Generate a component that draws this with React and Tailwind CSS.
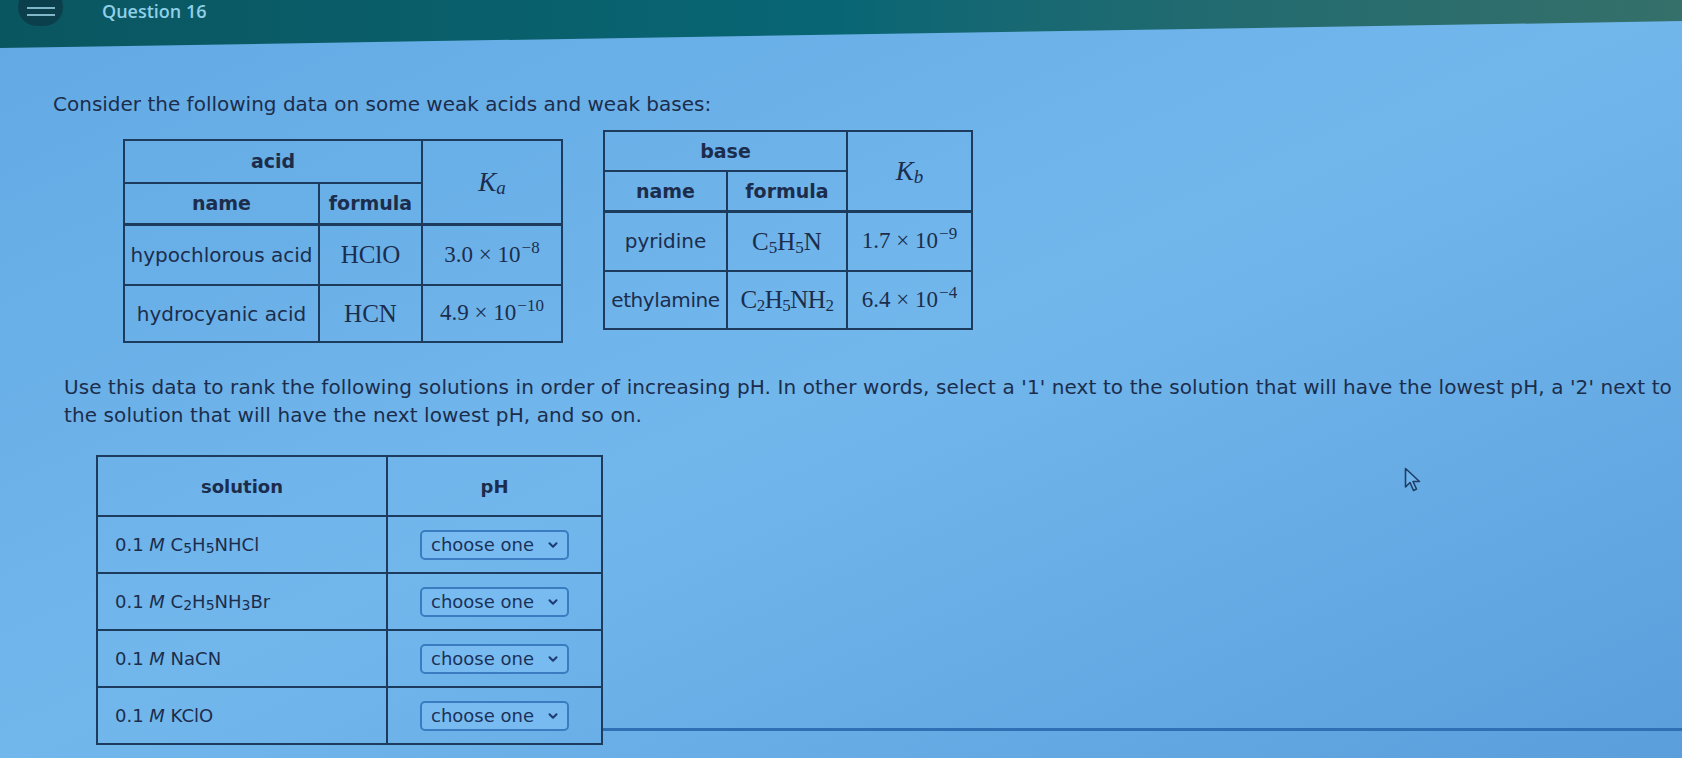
import React from "react";
import { ChevronDown } from "lucide-react";

// Serif scientific notation: 3.0 × 10^-8
const Sci = ({ m, e }) => (
  <span className="font-['Liberation_Serif','DejaVu_Serif',serif] text-[23px] whitespace-nowrap">
    {m} × 10
    <sup className="text-[17px] relative -top-[9px] ml-[1px]">−{e}</sup>
  </span>
);

const Sub = ({ children }) => <sub className="text-[14px] relative top-[2px]">{children}</sub>;

// serif formula subscript (bigger, lower)
const FSub = ({ children }) => <sub className="text-[17px] relative top-[3px]">{children}</sub>;

// pH dropdown
const Choose = () => (
  <div className="flex justify-center">
    <div className="flex items-center justify-between whitespace-nowrap h-[30px] w-[149px] pl-[9px] pr-[7px] rounded-[5px] border-2 border-[#3b7cc0] bg-[#78bbf0] text-[#1b3158] text-[18px]">
      <span>choose one</span>
      <ChevronDown size={14} strokeWidth={3.5} className="text-[#1e3b74]" />
    </div>
  </div>
);

const acids = [
  { name: "hypochlorous acid", formula: "HClO", m: "3.0", e: "8", h: "h-[61px]" },
  { name: "hydrocyanic acid", formula: "HCN", m: "4.9", e: "10", h: "h-[57px]" },
];

const solutions = [
  <>0.1 <i>M</i> C<Sub>5</Sub>H<Sub>5</Sub>NHCl</>,
  <>0.1 <i>M</i> C<Sub>2</Sub>H<Sub>5</Sub>NH<Sub>3</Sub>Br</>,
  <>0.1 <i>M</i> NaCN</>,
  <>0.1 <i>M</i> KClO</>,
];

const cell = "border-2 border-[#1d3b5c]";

export default function App() {
  return (
    <div className="relative w-[1682px] h-[758px] overflow-hidden flex flex-col bg-linear-to-br from-[#62a9e4] via-[#72b7ec] to-[#5a9fdc] text-[#1c2d4c] font-['DejaVu_Sans',sans-serif]">
      {/* Top bar */}
      <div className="h-[48px] shrink-0 flex items-start bg-linear-to-r from-[#0a5660] via-[#086674] to-[#35706a] [clip-path:polygon(0_0,100%_0,100%_44%,0_100%)]">
        <div className="ml-[18px] -mt-[12px] w-[45px] h-[38px] rounded-full bg-[#0c3f4c] flex flex-col items-center justify-end pb-[10px] gap-[5px]">
          <div className="w-[28px] h-[2px] bg-[#7fb6c8]" />
          <div className="w-[28px] h-[2px] bg-[#7fb6c8]" />
        </div>
        <div className="ml-[39px] mt-[1px] leading-[20px] text-[18px] font-semibold text-[#8fd0e8] font-['Open_Sans',sans-serif]">
          Question 16
        </div>
      </div>

      {/* Intro */}
      <p className="ml-[53px] mt-[44px] text-[20px] leading-[24px]">
        Consider the following data on some weak acids and weak bases:
      </p>

      {/* Acid and base tables */}
      <div className="flex items-start mt-[23px] ml-[123px] gap-[40px]">
        <table className="table-fixed border-collapse border-2 border-[#1d3b5c] text-[20px] text-center">
          <colgroup>
            <col className="w-[195px]" />
            <col className="w-[103px]" />
            <col className="w-[140px]" />
          </colgroup>
          <tbody>
            <tr className="h-[43px]">
              <th colSpan={2} className={`${cell} font-bold text-[19px]`}>acid</th>
              <th rowSpan={2} className={`${cell} font-normal`}>
                <span className="font-['Liberation_Serif',serif] italic text-[27px]">
                  K<sub className="text-[19px] relative top-[3px]">a</sub>
                </span>
              </th>
            </tr>
            <tr className="h-[41px] border-b-[3px] border-[#1d3b5c]">
              <th className={`${cell} font-bold text-[19px]`}>name</th>
              <th className={`${cell} font-bold text-[19px]`}>formula</th>
            </tr>
            {acids.map((a) => (
              <tr key={a.name} className={a.h}>
                <td className={`${cell} whitespace-nowrap`}>{a.name}</td>
                <td className={`${cell} font-['Liberation_Serif',serif] text-[25px]`}>{a.formula}</td>
                <td className={cell}>
                  <Sci m={a.m} e={a.e} />
                </td>
              </tr>
            ))}
          </tbody>
        </table>

        <table className="-mt-[9px] table-fixed border-collapse border-2 border-[#1d3b5c] text-[20px] text-center">
          <colgroup>
            <col className="w-[123px]" />
            <col className="w-[120px]" />
            <col className="w-[125px]" />
          </colgroup>
          <tbody>
            <tr className="h-[40px]">
              <th colSpan={2} className={`${cell} font-bold text-[19px]`}>base</th>
              <th rowSpan={2} className={`${cell} font-normal`}>
                <span className="font-['Liberation_Serif',serif] italic text-[27px]">
                  K<sub className="text-[19px] relative top-[3px]">b</sub>
                </span>
              </th>
            </tr>
            <tr className="h-[40px] border-b-[3px] border-[#1d3b5c]">
              <th className={`${cell} font-bold text-[19px]`}>name</th>
              <th className={`${cell} font-bold text-[19px]`}>formula</th>
            </tr>
            <tr className="h-[60px]">
              <td className={cell}>pyridine</td>
              <td className={`${cell} font-['Liberation_Serif',serif] text-[25px] whitespace-nowrap`}>
                C<FSub>5</FSub>H<FSub>5</FSub>N
              </td>
              <td className={cell}>
                <Sci m="1.7" e="9" />
              </td>
            </tr>
            <tr className="h-[58px]">
              <td className={`${cell} tracking-[-0.4px] whitespace-nowrap`}>ethylamine</td>
              <td className={`${cell} font-['Liberation_Serif',serif] text-[25px] whitespace-nowrap tracking-[-0.5px]`}>
                C<FSub>2</FSub>H<FSub>5</FSub>NH<FSub>2</FSub>
              </td>
              <td className={cell}>
                <Sci m="6.4" e="4" />
              </td>
            </tr>
          </tbody>
        </table>
      </div>

      {/* Instructions */}
      <p className="ml-[64px] mt-[30px] text-[20px] tracking-[0.1px] leading-[28px] whitespace-nowrap">
        Use this data to rank the following solutions in order of increasing pH. In other words, select a '1' next to the solution that will have the lowest pH, a '2' next to
        <br />
        the solution that will have the next lowest pH, and so on.
      </p>

      {/* Ranking table */}
      <div className="flex items-end mt-[26px] ml-[96px]">
        <table className="table-fixed border-collapse border-2 border-[#1d3b5c] text-[18px]">
          <colgroup>
            <col className="w-[290px]" />
            <col className="w-[215px]" />
          </colgroup>
          <tbody>
            <tr className="h-[60px]">
              <th className={`${cell} font-bold text-center`}>solution</th>
              <th className={`${cell} font-bold text-center`}>pH</th>
            </tr>
            {solutions.map((s, i) => (
              <tr key={i} className="h-[57px]">
                <td className={`${cell} pl-[17px] whitespace-nowrap`}>{s}</td>
                <td className={cell}>
                  <Choose />
                </td>
              </tr>
            ))}
          </tbody>
        </table>
        <div className="flex-1 mb-[14px] border-b-[3px] border-[#2f70b4]" />
      </div>

      {/* Mouse pointer */}
      <svg className="absolute left-[1404px] top-[467px]" width="18" height="26" viewBox="0 0 18 26">
        <path
          d="M1.5 1.5 L1.5 20 L6 15.5 L9.5 23.5 L12.5 22 L9 14.5 L15.5 14.5 Z"
          fill="#6fb4ea"
          stroke="#1f3f66"
          strokeWidth="1.6"
          strokeLinejoin="round"
        />
      </svg>
    </div>
  );
}
